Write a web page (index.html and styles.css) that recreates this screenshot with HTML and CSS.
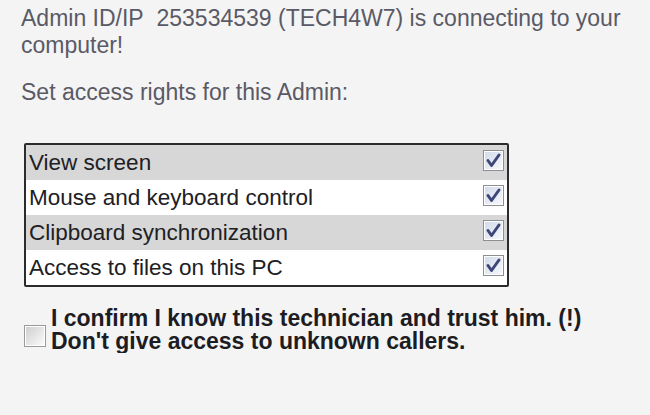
FILE: index.html
```html
<!DOCTYPE html>
<html>
<head>
<meta charset="utf-8">
<link rel="stylesheet" href="styles.css">
</head>
<body>
<p class="intro">Admin ID/IP&nbsp; 253534539 (TECH4W7) is connecting to your computer!</p>
<p class="prompt">Set access rights for this Admin:</p>
<div class="rights">
  <div class="row shade"><span>View screen</span><span class="cb"><svg viewBox="0 0 21 21" width="21" height="21"><defs><linearGradient id="g1" x1="0" y1="0" x2="1" y2="1"><stop offset="0" stop-color="#d3dbea"/><stop offset="1" stop-color="#f6f8fc"/></linearGradient></defs><rect x="0.5" y="0.5" width="20" height="20" fill="#fff" stroke="#8e8f94"/><rect x="2" y="2" width="17" height="17" fill="url(#g1)"/><path d="M5 10.5 L8.5 15.5 L16 5" fill="none" stroke="#3e4878" stroke-width="3" stroke-linejoin="round" stroke-linecap="round"/></svg></span></div>
  <div class="row"><span>Mouse and keyboard control</span><span class="cb"><svg viewBox="0 0 21 21" width="21" height="21"><rect x="0.5" y="0.5" width="20" height="20" fill="#fff" stroke="#8e8f94"/><rect x="2" y="2" width="17" height="17" fill="url(#g1)"/><path d="M5 10.5 L8.5 15.5 L16 5" fill="none" stroke="#3e4878" stroke-width="3" stroke-linejoin="round" stroke-linecap="round"/></svg></span></div>
  <div class="row shade"><span>Clipboard synchronization</span><span class="cb"><svg viewBox="0 0 21 21" width="21" height="21"><rect x="0.5" y="0.5" width="20" height="20" fill="#fff" stroke="#8e8f94"/><rect x="2" y="2" width="17" height="17" fill="url(#g1)"/><path d="M5 10.5 L8.5 15.5 L16 5" fill="none" stroke="#3e4878" stroke-width="3" stroke-linejoin="round" stroke-linecap="round"/></svg></span></div>
  <div class="row"><span>Access to files on this PC</span><span class="cb"><svg viewBox="0 0 21 21" width="21" height="21"><rect x="0.5" y="0.5" width="20" height="20" fill="#fff" stroke="#8e8f94"/><rect x="2" y="2" width="17" height="17" fill="url(#g1)"/><path d="M5 10.5 L8.5 15.5 L16 5" fill="none" stroke="#3e4878" stroke-width="3" stroke-linejoin="round" stroke-linecap="round"/></svg></span></div>
</div>
<div class="confirm">
  <span class="box"><svg viewBox="0 0 22 22" width="22" height="22"><defs><linearGradient id="g2" x1="0" y1="0" x2="1" y2="1"><stop offset="0" stop-color="#cfcfcf"/><stop offset="1" stop-color="#fafafa"/></linearGradient></defs><rect x="0.5" y="0.5" width="21" height="21" fill="#fff" stroke="#9a9a9e"/><rect x="2" y="2" width="18" height="18" fill="url(#g2)"/></svg></span>
  <p class="trust">I confirm I know this technician and trust him. (!)<br>Don't give access to unknown callers.</p>
</div>
</body>
</html>
```
FILE: styles.css
```css
html, body {
  margin: 0;
  background: #f4f4f4;
}
body {
  padding: 5px 10px 0 21px;
  font-family: "Liberation Sans", Arial, sans-serif;
}
.intro, .prompt {
  margin: 0;
  font-size: 23px;
  line-height: 27px;
  color: #5a5a66;
}
.prompt {
  margin-top: 20px;
}
.rights {
  margin-top: 37px;
  margin-left: 3px;
  width: 485px;
  box-sizing: border-box;
  border: 2px solid #2b2b2e;
  border-radius: 2px;
  background: #fff;
}
.row {
  display: flex;
  justify-content: space-between;
  align-items: flex-start;
  height: 35px;
  padding-left: 3px;
  font-size: 22.5px;
  line-height: 35px;
  color: #202024;
}
.row.shade {
  background: #d7d7d7;
}
.cb {
  display: block;
  margin-top: 5px;
  margin-right: 3px;
  height: 21px;
}
.cb svg, .box svg {
  display: block;
}
.confirm {
  display: flex;
  align-items: flex-start;
  margin-top: 20px;
  margin-left: 3px;
}
.box {
  display: block;
  margin-top: 18px;
  margin-right: 5px;
}
.trust {
  margin: 0;
  font-size: 23px;
  line-height: 23px;
  font-weight: bold;
  color: #1c1c22;
}
```
